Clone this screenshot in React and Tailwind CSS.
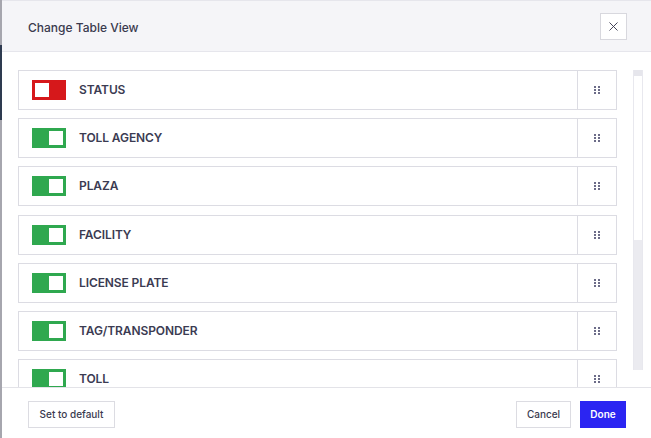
import React from 'react'
import { X } from 'lucide-react'

const columns = [
  { label: 'STATUS', on: false },
  { label: 'TOLL AGENCY', on: true },
  { label: 'PLAZA', on: true },
  { label: 'FACILITY', on: true },
  { label: 'LICENSE PLATE', on: true },
  { label: 'TAG/TRANSPONDER', on: true },
  { label: 'TOLL', on: true },
]

const Toggle = ({ on }) => (
  <div
    className={`flex h-[20px] w-[34px] p-[3px] ${on ? 'justify-end bg-[#2fa84f]' : 'justify-start bg-[#d6181b]'}`}
  >
    <div className="h-full w-[14px] bg-white" />
  </div>
)

const DragHandle = () => (
  <div className="grid grid-cols-2 gap-x-[2px] gap-y-[1px]">
    {[0, 1, 2, 3, 4, 5].map((i) => (
      <span key={i} className="block h-[2px] w-[2px] bg-[#6c6c88]" />
    ))}
  </div>
)

const ColumnRow = ({ label, on }) => (
  <div className="flex h-[40px] shrink-0 border border-[#dcdce3] bg-white">
    <div className="flex flex-1 items-center gap-[13px] pl-[13px]">
      <Toggle on={on} />
      <span className="text-[12px] font-semibold tracking-[-0.1px] text-[#3b3b52]">{label}</span>
    </div>
    <div className="flex w-[39px] items-center justify-center border-l border-[#dcdce3]">
      <DragHandle />
    </div>
  </div>
)

export default function App() {
  return (
    <div
      className="flex h-[438px] w-[651px] overflow-hidden bg-white"
      style={{ fontFamily: 'Inter, "Noto Sans", sans-serif' }}
    >
      {/* backdrop sliver */}
      <div className="flex w-[2px] flex-col bg-[#a6a6ae]">
        <div className="h-[45px]" />
        <div className="h-[75px] bg-[#2e3b50]" />
      </div>

      <div className="flex flex-1 flex-col bg-white">
        {/* Header */}
        <div className="flex h-[52px] shrink-0 items-center justify-between border-t border-b border-[#e6e6ec] bg-[#f5f5f8] pl-[26px] pr-[24px]">
          <h3 className="pt-[3px] text-[12px] font-medium text-[#3a3a4e]">Change Table View</h3>
          <button className="mt-[1px] flex h-[27px] w-[27px] items-center justify-center border border-[#d8d8de] bg-white text-[#3a3a4e]">
            <X size={15} strokeWidth={1.5} />
          </button>
        </div>

        {/* Body */}
        <div className="flex h-[335px] shrink-0 overflow-hidden">
          <div className="flex w-[615px] flex-col gap-[8.2px] pl-[16px] pt-[18px]">
            {columns.map((c) => (
              <ColumnRow key={c.label} {...c} />
            ))}
          </div>
          <div className="ml-[16px] mt-[18px] flex h-[300px] w-[10px] flex-col border-x border-[#e8e8ee]">
            <div className="h-[6px] bg-[#e6e6ec]" />
            <div className="flex-1" />
            <div className="h-[130px] bg-[#ebebf0]" />
          </div>
        </div>

        {/* Footer */}
        <div className="flex flex-1 items-start justify-between border-t border-[#e3e3e8] bg-white pl-[26px] pr-[25px] pt-[13px]">
          <button className="h-[27px] w-[87px] border border-[#dcdce2] bg-white text-[10px] font-medium text-[#3a3a4e]">
            Set to default
          </button>
          <div className="flex gap-[9px]">
            <button className="h-[27px] w-[55px] border border-[#dcdce2] bg-white text-[10px] font-medium text-[#3a3a4e]">
              Cancel
            </button>
            <button className="h-[27px] w-[46px] bg-[#2b25f2] text-[10px] font-semibold text-white">
              Done
            </button>
          </div>
        </div>
      </div>
    </div>
  )
}
